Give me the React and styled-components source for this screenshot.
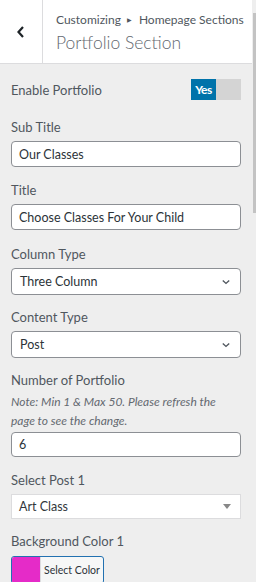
import React from 'react';
import styled, { createGlobalStyle } from 'styled-components';

const GlobalStyle = createGlobalStyle`
  html, body {
    margin: 0;
    padding: 0;
    background: #eeeeee;
    overflow: hidden;
  }
  body {
    font-family: Lato, "Noto Sans", sans-serif;
    color: #50575e;
  }
`;

const Panel = styled.div`
  position: relative;
  width: 256px;
  height: 582px;
  overflow: hidden;
  background: #eeeeee;
`;

const ScrollThumb = styled.div`
  position: absolute;
  top: 13px;
  right: 0;
  width: 3px;
  height: 200px;
  background: #c3c3c3;
`;

const Header = styled.div`
  box-sizing: border-box;
  display: flex;
  width: 252px;
  height: 64px;
  background: #fff;
  border-bottom: 1px solid #dcdcde;
`;

const BackButton = styled.div`
  width: 42px;
  flex-shrink: 0;
  display: flex;
  align-items: center;
  justify-content: center;
  border-right: 1px solid #dcdcde;
`;

const HeaderText = styled.div`
  padding: 11px 0 0 13px;
`;

const Breadcrumb = styled.div`
  font-size: 12px;
  line-height: 18px;
  color: #50575e;
  white-space: nowrap;
`;

const Arrow = styled.span`
  display: inline-block;
  font-size: 6px;
  margin: 0 7px 0 6px;
  vertical-align: 2px;
`;

const SectionTitle = styled.div`
  font-size: 17.5px;
  font-weight: 300;
  line-height: 27px;
  color: #646970;
`;

const Body = styled.div`
  padding: 15px 15px 0 11px;
  display: flex;
  flex-direction: column;
`;

const Control = styled.div`
  display: flex;
  flex-direction: column;
  margin-bottom: ${p => p.gap || 14}px;
`;

const ToggleRow = styled.div`
  display: flex;
  align-items: center;
  justify-content: space-between;
  margin-bottom: 18px;
`;

const Label = styled.div`
  font-size: 13px;
  line-height: 18px;
  color: #50575e;
  margin-bottom: ${p => p.gap ?? 5}px;
`;

const Note = styled.div`
  font-size: 12px;
  font-style: italic;
  line-height: 19px;
  color: #646970;
  margin: 3px 0 2px;
`;

const Toggle = styled.div`
  display: flex;
  width: 50px;
  height: 21px;
  background: #d4d4d4;
`;

const ToggleOn = styled.div`
  width: 25px;
  background: #0073aa;
  color: #fff;
  font-size: 12px;
  font-weight: 700;
  display: flex;
  align-items: center;
  justify-content: center;
  letter-spacing: -0.5px;
`;

const TextBox = styled.div`
  box-sizing: border-box;
  height: ${p => p.h || 26}px;
  border: 1px solid #8c8f94;
  border-radius: 4px;
  background: #fff;
  padding: 0 7px;
  display: flex;
  align-items: center;
  font-size: 12.5px;
  color: #2c3338;
`;

const Dropdown = styled(TextBox)`
  justify-content: space-between;
  padding: 0 9px 0 8px;
  height: 27px;
`;

const Select2 = styled.div`
  box-sizing: border-box;
  height: 25px;
  border: 1px solid #dcdcde;
  background: #fff;
  padding: 0 9px 0 7px;
  display: flex;
  align-items: center;
  justify-content: space-between;
  font-size: 12.5px;
  color: #32373c;
`;

const Caret = styled.span`
  width: 0;
  height: 0;
  border-left: 4px solid transparent;
  border-right: 4px solid transparent;
  border-top: 5px solid #888;
`;

const ColorButton = styled.div`
  box-sizing: border-box;
  display: flex;
  width: 93px;
  height: 28px;
  border: 1px solid #2271b1;
  border-radius: 3px;
  overflow: hidden;
  background: #f6f7f7;
`;

const Swatch = styled.div`
  width: 28px;
  background: ${p => p.color};
  border-right: 1px solid #dcdcde;
`;

const ColorText = styled.div`
  flex: 1;
  display: flex;
  align-items: center;
  justify-content: center;
  font-size: 10.5px;
  color: #2c3338;
`;

const Chevron = () => (
  <svg width="10" height="10" viewBox="0 0 10 10">
    <path d="M1.8 3.4l3.2 3L8.2 3.4" fill="none" stroke="#50575e" strokeWidth="1.4" />
  </svg>
);

const fields = [
  { label: 'Sub Title', value: 'Our Classes', gap: 14 },
  { label: 'Title', value: 'Choose Classes For Your Child', gap: 15 },
];

const App = () => (
  <Panel>
    <GlobalStyle />
    <Header>
      <BackButton>
        <svg width="10" height="14" viewBox="0 0 10 14">
          <path d="M7 2L2.5 7L7 12" fill="none" stroke="#1d2327" strokeWidth="2.2" />
        </svg>
      </BackButton>
      <HeaderText>
        <Breadcrumb>Customizing<Arrow>▶</Arrow>Homepage Sections</Breadcrumb>
        <SectionTitle>Portfolio Section</SectionTitle>
      </HeaderText>
    </Header>
    <Body>
      <ToggleRow>
        <Label gap={0}>Enable Portfolio</Label>
        <Toggle><ToggleOn>Yes</ToggleOn></Toggle>
      </ToggleRow>
      {fields.map(f => (
        <Control key={f.label} gap={f.gap}>
          <Label>{f.label}</Label>
          <TextBox>{f.value}</TextBox>
        </Control>
      ))}
      <Control gap={13}>
        <Label>Column Type</Label>
        <Dropdown>Three Column<Chevron /></Dropdown>
      </Control>
      <Control gap={13}>
        <Label>Content Type</Label>
        <Dropdown>Post<Chevron /></Dropdown>
      </Control>
      <Control>
        <Label gap={0}>Number of Portfolio</Label>
        <Note>Note: Min 1 &amp; Max 50. Please refresh the page to see the change.</Note>
        <TextBox h={25}>6</TextBox>
      </Control>
      <Control gap={13}>
        <Label>Select Post 1</Label>
        <Select2>Art Class<Caret /></Select2>
      </Control>
      <Control>
        <Label gap={6}>Background Color 1</Label>
        <ColorButton>
          <Swatch color="#e52bc8" />
          <ColorText>Select Color</ColorText>
        </ColorButton>
      </Control>
    </Body>
    <ScrollThumb />
  </Panel>
);

export default App;
